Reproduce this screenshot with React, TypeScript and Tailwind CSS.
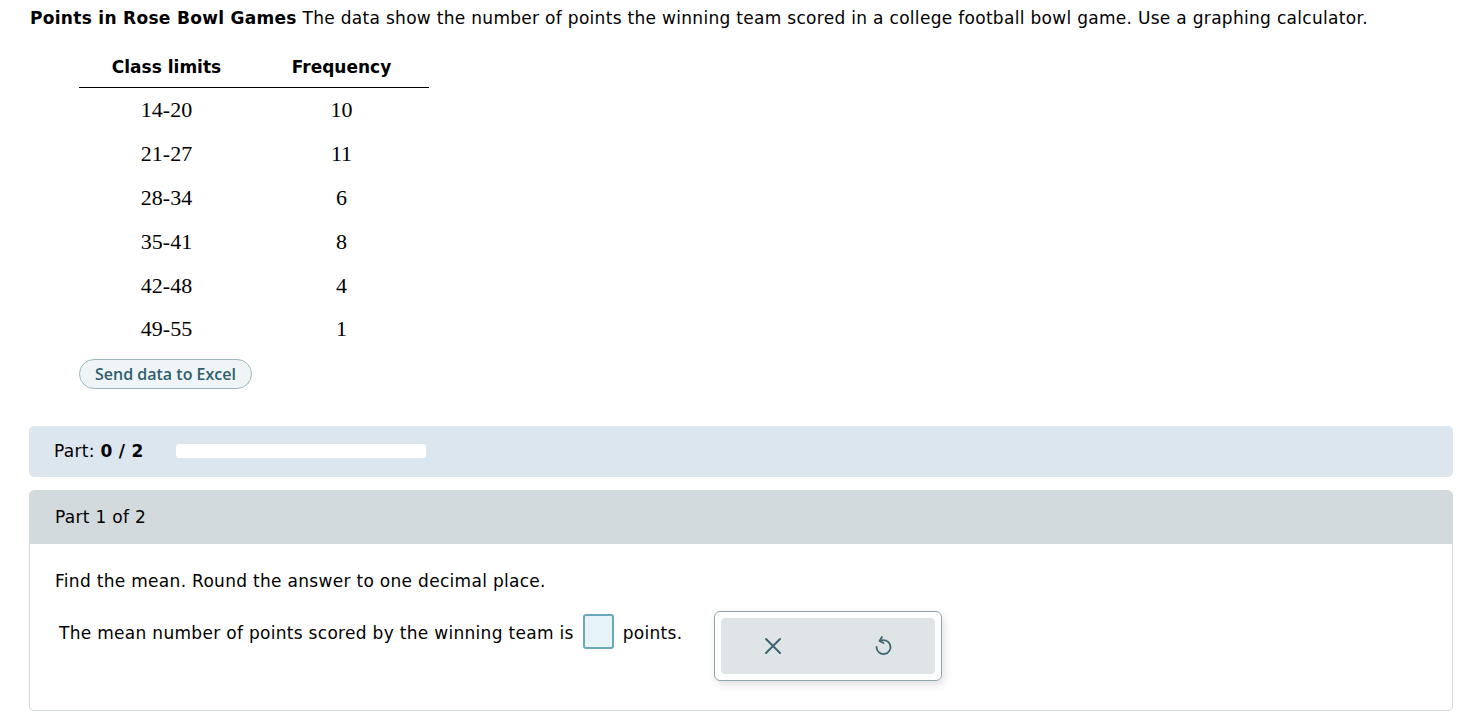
import React from 'react';

const rows = [
  ['14-20', '10'],
  ['21-27', '11'],
  ['28-34', '6'],
  ['35-41', '8'],
  ['42-48', '4'],
  ['49-55', '1'],
];

export default function App() {
  return (
    <div
      className="min-h-screen bg-white text-[17px] tracking-[0.3px] text-black"
      style={{ fontFamily: '"DejaVu Sans", Verdana, sans-serif' }}
    >
      <div className="pl-[30px] pr-[15px] pt-[7px]">
        <p className="leading-[22px]">
          <b>Points in Rose Bowl Games</b> The data show the number of points the winning team scored in a college football bowl game. Use a graphing calculator.
        </p>

        {/* frequency table */}
        <div className="ml-[49px] mt-[28px] w-[350px] tracking-normal">
          <div className="grid grid-cols-2 border-b border-black pb-[10px] text-[17px] font-bold leading-[20px]">
            <div className="text-center">Class limits</div>
            <div className="text-center">Frequency</div>
          </div>
          <div style={{ fontFamily: '"Liberation Serif", "Times New Roman", serif' }}>
            {rows.map(([c, f]) => (
              <div key={c} className="grid h-[43.8px] grid-cols-2 items-center text-[22px]">
                <div className="text-center">{c}</div>
                <div className="text-center">{f}</div>
              </div>
            ))}
          </div>
          <button
            className="mt-[8px] h-[30px] rounded-full border border-[#9fb8c0] bg-[#eff5f7] px-[15px] text-[16px] font-semibold text-[#2f5f6c]"
            style={{ fontFamily: '"Open Sans", Lato, sans-serif' }}
          >
            Send data to Excel
          </button>
        </div>
      </div>

      <div className="pl-[29px] pr-[15px] pt-[37px]">
        {/* progress bar */}
        <div className="flex h-[51px] items-center rounded-[5px] bg-[#dbe6ef] pl-[25px]">
          <span>
            Part: <b>0 / 2</b>
          </span>
          <div className="ml-[32px] h-[14px] w-[250px] rounded-[3px] bg-white" />
        </div>

        {/* part panel */}
        <div className="mt-[13px] overflow-hidden rounded-[5px] border border-[#d3dbde]">
          <div className="flex h-[53px] items-center bg-[#d2dadd] pl-[25px]">Part 1 of 2</div>
          <div className="h-[166px] pl-[25px] pt-[26px]">
            <p className="leading-[22px]">Find the mean. Round the answer to one decimal place.</p>
            <div className="mt-[15px] flex items-start">
              <div className="flex items-center pl-[4px] pt-[7px]">
                <span className="pt-[4px]">The mean number of points scored by the winning team is</span>
                <span className="mx-[9px] inline-block h-[35px] w-[31px] rounded-[3px] border-2 border-[#6aa9bb] bg-[#e6f4f8]" />
                <span className="pt-[4px]">points.</span>
              </div>
              <div className="ml-[32px] mt-[4px] rounded-[6px] border border-[#8fa3ab] bg-white p-[6px] shadow-[2px_4px_8px_rgba(0,0,0,0.12)]">
                <div className="flex h-[56px] w-[214px] items-center justify-between rounded-[4px] bg-[#dfe5e7] px-[42px] text-[#3e6470]">
                  <svg width="20" height="20" viewBox="0 0 20 20" fill="none" stroke="currentColor" strokeWidth="2" strokeLinecap="round">
                    <path d="M3 3 L17 17 M17 3 L3 17" />
                  </svg>
                  <svg width="20" height="22" viewBox="0 0 20 22" fill="none" stroke="currentColor" strokeWidth="1.8" strokeLinecap="round" strokeLinejoin="round">
                    <path d="M7 6 A7 7 0 1 1 3.5 12" />
                    <path d="M9 2 L6.5 6 L10.5 8" />
                  </svg>
                </div>
              </div>
            </div>
          </div>
        </div>
      </div>
    </div>
  );
}
